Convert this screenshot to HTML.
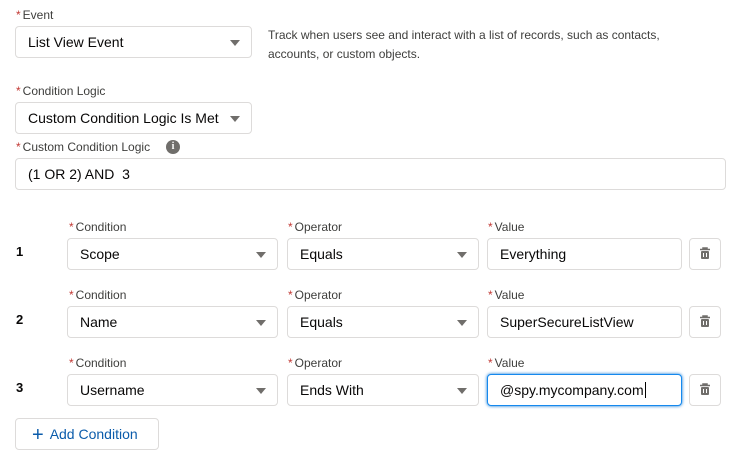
<!DOCTYPE html>
<html><head><style>
*{box-sizing:border-box;margin:0;padding:0}
body{width:748px;height:452px;background:#fff;font-family:"Liberation Sans",sans-serif;position:relative;overflow:hidden;color:#080707}
.l{position:absolute;font-size:12px;color:#3e3e3c;line-height:14px}
.l b{color:#c23934;font-weight:normal;margin-right:2px}
.b{position:absolute;height:32px;border:1px solid #dddbda;border-radius:4px;background:#fff;font-size:14px;line-height:30px;padding-left:12px;white-space:nowrap}
.s::after{content:"";position:absolute;right:11px;top:13px;border-left:5.5px solid transparent;border-right:5.5px solid transparent;border-top:6px solid #706e6b}
.n{position:absolute;font-size:13px;font-weight:bold;left:16px}
.t{position:absolute;left:689px;width:32px;height:32px;border:1px solid #dddbda;border-radius:4px}
</style></head><body>
<div class="l" style="left:16px;top:8px"><b>*</b>Event</div>
<div class="b s" style="left:15px;top:26px;width:237px">List View Event</div>
<div style="position:absolute;left:268px;top:26px;font-size:12px;line-height:19px;color:#3e3e3c;width:440px">Track when users see and interact with a list of records, such as contacts, accounts, or custom objects.</div>
<div class="l" style="left:16px;top:84px"><b>*</b>Condition Logic</div>
<div class="b s" style="left:15px;top:102px;width:237px">Custom Condition Logic Is Met</div>
<div class="l" style="left:16px;top:140px"><b>*</b>Custom Condition Logic</div>
<div style="position:absolute;left:166px;top:140px;width:14px;height:14px;border-radius:50%;background:#706e6b;color:#fff;font-size:10px;font-weight:bold;text-align:center;line-height:14px;font-family:'Liberation Serif',serif">i</div>
<div class="b" style="left:15px;top:158px;width:711px">(1 OR 2) AND&nbsp; 3</div>

<div class="l" style="left:69px;top:220px"><b>*</b>Condition</div>
<div class="l" style="left:288px;top:220px"><b>*</b>Operator</div>
<div class="l" style="left:488px;top:220px"><b>*</b>Value</div>
<div class="n" style="top:244px">1</div>
<div class="b s" style="left:67px;top:238px;width:211px">Scope</div>
<div class="b s" style="left:287px;top:238px;width:192px">Equals</div>
<div class="b" style="left:487px;top:238px;width:195px">Everything</div>
<div class="t" style="top:238px"><svg width="30" height="30" viewBox="0 0 30 30"><path d="M10 10.5h10M13 10.5v-1.5h4v1.5" stroke="#706e6b" stroke-width="1.5" fill="none"/><rect x="11" y="12" width="8" height="8" rx="1" fill="#706e6b"/><path d="M13.5 14v4M16.5 14v4" stroke="#fff" stroke-width="1"/></svg></div>

<div class="l" style="left:69px;top:288px"><b>*</b>Condition</div>
<div class="l" style="left:288px;top:288px"><b>*</b>Operator</div>
<div class="l" style="left:488px;top:288px"><b>*</b>Value</div>
<div class="n" style="top:312px">2</div>
<div class="b s" style="left:67px;top:306px;width:211px">Name</div>
<div class="b s" style="left:287px;top:306px;width:192px">Equals</div>
<div class="b" style="left:487px;top:306px;width:195px">SuperSecureListView</div>
<div class="t" style="top:306px"><svg width="30" height="30" viewBox="0 0 30 30"><path d="M10 10.5h10M13 10.5v-1.5h4v1.5" stroke="#706e6b" stroke-width="1.5" fill="none"/><rect x="11" y="12" width="8" height="8" rx="1" fill="#706e6b"/><path d="M13.5 14v4M16.5 14v4" stroke="#fff" stroke-width="1"/></svg></div>

<div class="l" style="left:69px;top:356px"><b>*</b>Condition</div>
<div class="l" style="left:288px;top:356px"><b>*</b>Operator</div>
<div class="l" style="left:488px;top:356px"><b>*</b>Value</div>
<div class="n" style="top:380px">3</div>
<div class="b s" style="left:67px;top:374px;width:211px">Username</div>
<div class="b s" style="left:287px;top:374px;width:192px">Ends With</div>
<div class="b" style="left:487px;top:374px;width:195px;border-color:#1589ee;box-shadow:0 0 3px #0070d2">@spy.mycompany.com<span style="border-left:1px solid #000;margin-left:1px"></span></div>
<div class="t" style="top:374px"><svg width="30" height="30" viewBox="0 0 30 30"><path d="M10 10.5h10M13 10.5v-1.5h4v1.5" stroke="#706e6b" stroke-width="1.5" fill="none"/><rect x="11" y="12" width="8" height="8" rx="1" fill="#706e6b"/><path d="M13.5 14v4M16.5 14v4" stroke="#fff" stroke-width="1"/></svg></div>

<div class="b" style="left:15px;top:418px;width:144px;color:#0b5cab;padding-left:16px"><span style="font-size:20px;vertical-align:-2px;margin-right:6px">+</span>Add Condition</div>
</body></html>
